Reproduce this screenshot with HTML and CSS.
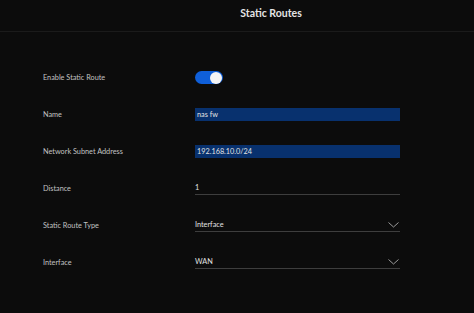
FILE: index.html
```html
<!DOCTYPE html>
<html>
<head>
<meta charset="utf-8">
<link rel="stylesheet" href="styles.css">
</head>
<body>
<div class="header"><span class="title">Static Routes</span></div>
<div class="form">
  <div class="row">
    <div class="label">Enable Static Route</div>
    <div class="ctrl"><span class="toggle"><span class="knob"></span></span></div>
  </div>
  <div class="row">
    <div class="label">Name</div>
    <div class="ctrl"><div class="field filled">nas fw</div></div>
  </div>
  <div class="row">
    <div class="label">Network Subnet Address</div>
    <div class="ctrl"><div class="field filled">192.168.10.0/24</div></div>
  </div>
  <div class="row">
    <div class="label">Distance</div>
    <div class="ctrl"><div class="field line">1</div></div>
  </div>
  <div class="row">
    <div class="label">Static Route Type</div>
    <div class="ctrl"><div class="field line select"><span>Interface</span><svg class="chev" width="11" height="6" viewBox="0 0 11 6"><path d="M0.5 0.5 L5.5 5 L10.5 0.5" fill="none" stroke="#9a9a9a" stroke-width="1"/></svg></div></div>
  </div>
  <div class="row">
    <div class="label">Interface</div>
    <div class="ctrl"><div class="field line select"><span>WAN</span><svg class="chev" width="11" height="6" viewBox="0 0 11 6"><path d="M0.5 0.5 L5.5 5 L10.5 0.5" fill="none" stroke="#9a9a9a" stroke-width="1"/></svg></div></div>
  </div>
</div>
</body>
</html>
```
FILE: styles.css
```css
html, body {
  margin: 0;
  padding: 0;
  background: #0c0c0c;
  font-family: Lato, "Liberation Sans", sans-serif;
  width: 474px;
  height: 313px;
  overflow: hidden;
}
.header {
  height: 32px;
  border-bottom: 1px solid #1b1b1b;
  display: flex;
  align-items: center;
  justify-content: center;
  padding-left: 68px;
  box-sizing: border-box;
}
.title {
  color: #e4e4e4;
  font-weight: 700;
  font-size: 10.5px;
  margin-top: -6px;
}
.form {
  padding-top: 27px;
}
.row {
  display: flex;
  align-items: center;
  height: 37px;
}
.label {
  width: 152px;
  padding-left: 43px;
  color: #c2c2c2;
  font-size: 7.3px;
}
.ctrl {
  width: 205px;
}
.toggle {
  display: block;
  width: 28px;
  height: 13px;
  border-radius: 7px;
  background: #0f5fd9;
  position: relative;
}
.knob {
  position: absolute;
  right: 1px;
  top: 0.5px;
  width: 12px;
  height: 12px;
  border-radius: 50%;
  background: #f4f4f4;
}
.field {
  height: 13px;
  box-sizing: border-box;
  font-size: 7.3px;
  color: #e2e2e2;
  display: flex;
  align-items: center;
}
.filled {
  background: #08316e;
  padding-left: 2px;
}
.line {
  border-bottom: 1px solid #3e3e3e;
  padding-bottom: 1px;
}
.select {
  justify-content: space-between;
}
.chev {
  margin-right: 1px;
}
```
